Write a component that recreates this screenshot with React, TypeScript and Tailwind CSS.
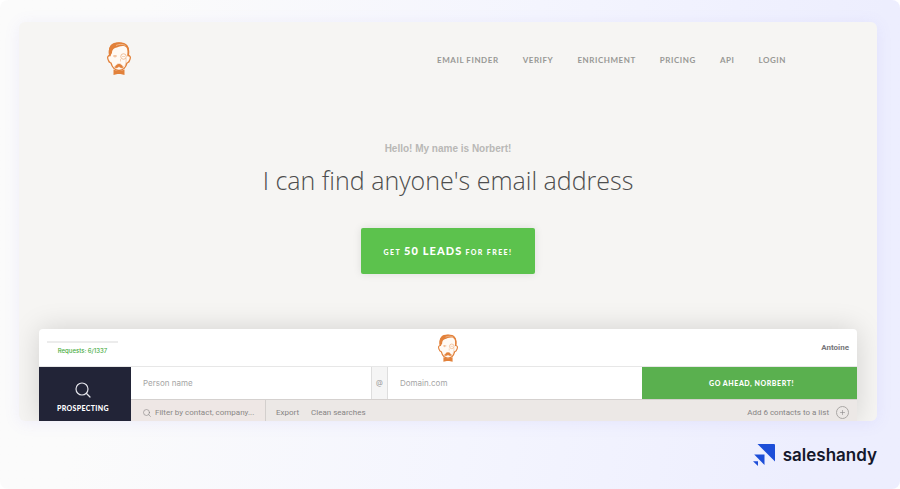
import React from "react";
import { Plus } from "lucide-react";

const navItems = ["Email Finder", "Verify", "Enrichment", "Pricing", "API", "Login"];

function NorbertLogo({ className }: { className: string }) {
  return (
    <svg viewBox="0 0 48 66" className={className} fill="none" stroke="#e2813a" role="img" aria-label="Norbert">
      <path
        d="M6 27 C1 27 0 31 3 37 C4 41 6 41 8 42 C10 50 16 57 24 57 C32 57 38 50 40 42 C42 41 44 41 45 37 C48 31 47 27 42 27 C46 8 38 2 24 2 C10 2 2 8 6 27 Z"
        fill="#fffaf4"
        strokeWidth="2.6"
      />
      <path
        d="M4 28 C1 11 9 1 24 1 C39 1 47 11 44 28 L41 26 C42 15 40 10 34 8 C27 7 22 10 16 12 C11 14 10 18 10 22 L7 27 Z"
        fill="#e2813a"
        stroke="none"
      />
      <path d="M18 7 C24 4 31 4 37 7" stroke="#f5d9c0" strokeWidth="1.2" />
      <g opacity="0.6">
        <path d="M12 28 H20 M16 26 V31" strokeWidth="1.8" />
        <circle cx="33" cy="29" r="5.5" strokeWidth="1.6" />
        <path d="M30 29 H36 M38 32 C39 38 37 43 36 48 M27 34 V39" strokeWidth="1.1" />
      </g>
      <path d="M15 50 C18 49 19 43 24 44 C29 43 30 49 33 50 C31 53 27 52 24 49 C21 52 17 53 15 50 Z" fill="#e2813a" strokeWidth="1" />
      <path d="M13 55 Q24 60 35 55 V66 L27 64 H21 L13 66 Z" fill="#e2813a" stroke="none" />
    </svg>
  );
}

function SearchGlyph({ className }: { className: string }) {
  return (
    <svg viewBox="0 0 16 16" className={className} fill="none" stroke="currentColor" strokeWidth="1.2" strokeLinecap="round" aria-hidden="true">
      <circle cx="7" cy="7" r="6" />
      <path d="M11.5 11.5 L15 15" />
    </svg>
  );
}

function Header() {
  return (
    <header className="flex items-center justify-between pt-5 pr-[91px] pl-22">
      <a href="#home">
        <NorbertLogo className="block h-[33px] w-6" />
      </a>
      <nav className="flex gap-6 pt-0.5 font-['Lato',sans-serif] text-[8px] leading-4 font-bold tracking-[0.07em] text-[#989895] uppercase">
        {navItems.map((item) => (
          <a key={item} href={"#" + item.toLowerCase().replace(" ", "-")}>
            {item}
          </a>
        ))}
      </nav>
    </header>
  );
}

function Hero() {
  return (
    <section className="flex flex-col items-center pt-16 text-center">
      <p className="pt-px font-['Liberation_Sans',sans-serif] text-[10px] leading-[18px] font-bold text-[#b9b8b6]">
        Hello! My name is Norbert!
      </p>
      <h1 className="mt-1 font-['Open_Sans',sans-serif] text-[25px] leading-9 font-light text-[#4d4d4d]">
        I can find anyone's email address
      </h1>
      <button
        type="button"
        className="mt-[30px] h-[46px] rounded-xs bg-[#5cc24d] px-[23px] font-['Lato',sans-serif] text-[7px] font-black tracking-[0.2em] text-white uppercase shadow-[0_0_8px_rgba(0,0,0,0.10)]"
      >
        Get <span className="text-[11px] tracking-widest">50 leads</span> for free!
      </button>
    </section>
  );
}

function AppPanel() {
  return (
    <section className="mx-5 mt-[55px] overflow-hidden rounded-t bg-white shadow-[0_0_28px_rgba(0,0,0,0.15)]">
      <div className="grid h-[38px] grid-cols-[1fr_auto_1fr] items-center border-b border-[#e7e7e7] px-2">
        <div className="w-[71px] border-t-2 border-[#ececec] pt-1 text-center text-[6px] leading-2 font-medium text-[#45ab3d]">
          Requests: 6/1337
        </div>
        <NorbertLogo className="h-7 w-5" />
        <span className="justify-self-end font-['Roboto',sans-serif] text-[8px] font-bold text-[#77777a]">Antoine</span>
      </div>
      <div className="flex">
        <a
          href="#prospecting"
          className="flex w-[92px] shrink-0 flex-col items-center gap-1 bg-[#222437] pt-[15px] pr-1 font-['Lato',sans-serif] text-[7px] leading-3 font-black tracking-wider text-white uppercase"
        >
          <SearchGlyph className="size-4 text-[#e3e3ea]" />
          Prospecting
        </a>
        <div className="min-w-0 flex-1">
          <form className="grid h-8 grid-cols-[240fr_17px_254fr_215fr]" onSubmit={(e) => e.preventDefault()}>
            <input
              aria-label="Person name"
              placeholder="Person name"
              className="min-w-0 px-3 text-[8px] outline-none placeholder:text-[#a5a5a5]"
            />
            <span className="flex items-center justify-center border-x border-[#dedede] bg-[#f5f5f5] text-[7px] text-[#999999]">@</span>
            <input
              aria-label="Domain"
              placeholder="Domain.com"
              className="min-w-0 px-3 text-[8px] outline-none placeholder:text-[#a5a5a5]"
            />
            <button
              type="submit"
              className="bg-[#5ab04f] pl-1 font-['Lato',sans-serif] text-[7px] font-black tracking-[0.08em] text-white uppercase"
            >
              Go ahead, Norbert!
            </button>
          </form>
          <div className="flex h-[22px] items-stretch border-t border-[#d5d1cf] bg-[#ece8e6] font-['Roboto',sans-serif] text-[8px] text-[#868484]">
            <div className="flex w-[135px] items-center gap-1 border-r border-[#d3cfcd] bg-[#eee7e5] pt-1 pl-3">
              <SearchGlyph className="size-2 shrink-0" />
              <input
                aria-label="Filter by contact, company"
                placeholder="Filter by contact, company..."
                className="h-3 min-w-0 flex-1 leading-3 outline-none placeholder:text-[#8b8786]"
              />
            </div>
            <button type="button" className="pt-1 pl-2.5">
              Export
            </button>
            <button type="button" className="pt-1 pl-3">
              Clean searches
            </button>
            <button type="button" className="ml-auto flex items-center gap-[7px] pt-1 pr-2">
              Add 6 contacts to a list
              <span className="flex size-[13px] items-center justify-center rounded-full border border-[#aaa7a5]">
                <Plus className="size-[7px]" />
              </span>
            </button>
          </div>
        </div>
      </div>
    </section>
  );
}

function SaleshandyBrand() {
  return (
    <footer className="mt-[22px] flex items-center justify-end gap-2">
      <svg viewBox="0 0 22 22" className="size-[22px]" fill="#1d4ed8" aria-hidden="true">
        <path d="M4.5 0 H21 Q22 0 22 1 V17.5 Z" />
        <path d="M1.2 10.5 H11.5 V21 Z" />
        <path d="M0 17.3 H5 V22 Z" />
      </svg>
      <span className="text-[17px] leading-6 font-semibold text-[#14172b]">saleshandy</span>
    </footer>
  );
}

export default function App() {
  return (
    <div className="bg-white">
      <main className="min-h-screen rounded-lg bg-linear-100 from-[#fbfbfb] from-15% via-[#f4f5fe] via-55% to-[#edeefe] to-90% pt-[22px] pr-[23px] pb-5 pl-[19px] font-['Inter',sans-serif]">
        <div className="overflow-hidden rounded-md bg-[#f6f5f3] shadow-[0_2px_16px_rgba(130,120,240,0.10)]">
          <Header />
          <Hero />
          <AppPanel />
        </div>
        <SaleshandyBrand />
      </main>
    </div>
  );
}
